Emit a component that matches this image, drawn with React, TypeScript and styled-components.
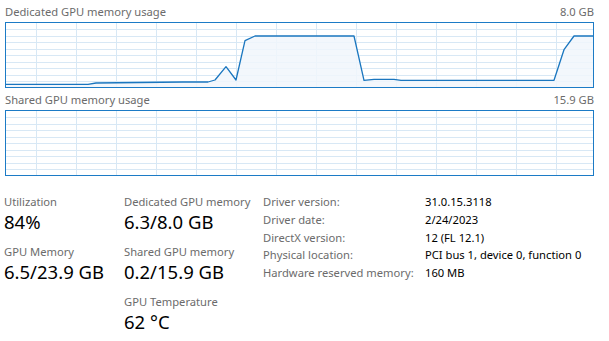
import React from 'react';
import styled, { createGlobalStyle } from 'styled-components';

const GlobalStyle = createGlobalStyle`
  body {
    margin: 0;
    background: #ffffff;
    font-family: 'Segoe UI', 'Noto Sans', 'Open Sans', sans-serif;
  }
`;

const Page = styled.div`
  width: 609px;
  height: 341px;
  padding: 4px 15px 0 5px;
  box-sizing: border-box;
  overflow: hidden;
`;

const GraphHeader = styled.div`
  display: flex;
  justify-content: space-between;
  font-size: 11.2px;
  line-height: 16px;
  color: #6b6b6b;
  margin-bottom: 2px;
`;

const GraphBox = styled.div<{ $gap?: number }>`
  height: 66px;
  border: 1px solid #1c7bc6;
  box-sizing: border-box;
  margin-bottom: ${({ $gap }) => $gap ?? 0}px;
  svg {
    display: block;
  }
`;

const Stats = styled.div`
  display: grid;
  grid-template-columns: 120px 139px 1fr;
  align-items: start;
  margin-top: 18px;
  margin-left: -1px;
`;

const StatColumn = styled.div`
  display: flex;
  flex-direction: column;
`;

const StatLabel = styled.div`
  font-size: 11.2px;
  line-height: 16px;
  color: #6b6b6b;
`;

const StatValue = styled.div`
  font-size: 18.5px;
  line-height: 24px;
  color: #000000;
  margin-bottom: 10px;
`;

const InfoGrid = styled.div`
  display: grid;
  grid-template-columns: 162px 1fr;
  grid-auto-rows: 17.8px;
  font-size: 11.2px;
  line-height: 17.8px;
  margin-top: -1px;
`;

const InfoKey = styled.div`
  color: #6b6b6b;
`;

const InfoVal = styled.div`
  color: #000000;
`;

const W = 587;
const H = 64;

function Grid() {
  const v: number[] = [];
  for (let x = 30; x < W; x += 40) v.push(x);
  const h: number[] = [];
  for (let i = 1; i < 10; i++) h.push(i * 6.5);
  return (
    <g stroke="#d8e8f5" strokeWidth={1} shapeRendering="crispEdges">
      {v.map((x) => (
        <line key={`v${x}`} x1={x} y1={0} x2={x} y2={H} />
      ))}
      {h.map((y) => (
        <line key={`h${y}`} x1={0} y1={y} x2={W} y2={y} />
      ))}
    </g>
  );
}

// page coordinates of the dedicated memory line
const dedicated: [number, number][] = [
  [5, 84.3], [88, 84.3], [96, 83], [183, 82], [208, 82], [215, 80],
  [226, 66.7], [236, 80], [245, 40.7], [255, 36], [354, 36], [364, 80.3],
  [374, 79.3], [394, 79.3], [401, 80.3], [554, 80.3], [564, 49.7],
  [574, 36], [595, 36],
];

function DedicatedChart() {
  const pts = dedicated.map(([x, y]) => `${x - 6},${y - 23}`).join(' ');
  const area = `0,${H} ${pts} ${W},${H}`;
  return (
    <svg width={W} height={H} viewBox={`0 0 ${W} ${H}`}>
      <Grid />
      <polygon points={area} fill="#f1f6fb" fillOpacity={0.85} />
      <polyline points={pts} fill="none" stroke="#1a76bf" strokeWidth={1.3} strokeLinejoin="round" />
    </svg>
  );
}

function SharedChart() {
  return (
    <svg width={W} height={H} viewBox={`0 0 ${W} ${H}`}>
      <Grid />
    </svg>
  );
}

const info: [string, string][] = [
  ['Driver version:', '31.0.15.3118'],
  ['Driver date:', '2/24/2023'],
  ['DirectX version:', '12 (FL 12.1)'],
  ['Physical location:', 'PCI bus 1, device 0, function 0'],
  ['Hardware reserved memory:', '160 MB'],
];

export default function App() {
  return (
    <Page>
      <GlobalStyle />
      <GraphHeader>
        <span>Dedicated GPU memory usage</span>
        <span>8.0 GB</span>
      </GraphHeader>
      <GraphBox $gap={4}>
        <DedicatedChart />
      </GraphBox>
      <GraphHeader>
        <span>Shared GPU memory usage</span>
        <span>15.9 GB</span>
      </GraphHeader>
      <GraphBox>
        <SharedChart />
      </GraphBox>
      <Stats>
        <StatColumn>
          <StatLabel>Utilization</StatLabel>
          <StatValue>84%</StatValue>
          <StatLabel>GPU Memory</StatLabel>
          <StatValue>6.5/23.9 GB</StatValue>
        </StatColumn>
        <StatColumn>
          <StatLabel>Dedicated GPU memory</StatLabel>
          <StatValue>6.3/8.0 GB</StatValue>
          <StatLabel>Shared GPU memory</StatLabel>
          <StatValue>0.2/15.9 GB</StatValue>
          <StatLabel>GPU Temperature</StatLabel>
          <StatValue>62 °C</StatValue>
        </StatColumn>
        <InfoGrid>
          {info.map(([k, v]) => (
            <React.Fragment key={k}>
              <InfoKey>{k}</InfoKey>
              <InfoVal>{v}</InfoVal>
            </React.Fragment>
          ))}
        </InfoGrid>
      </Stats>
    </Page>
  );
}
